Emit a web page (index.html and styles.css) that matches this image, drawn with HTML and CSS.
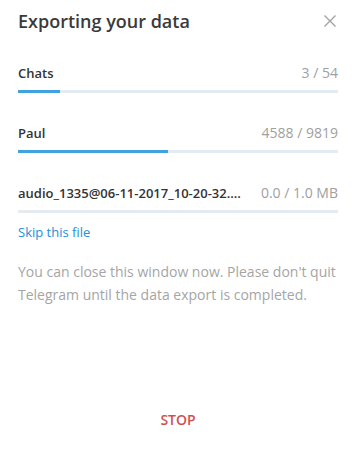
FILE: index.html
```html
<!DOCTYPE html>
<html>
<head>
<meta charset="utf-8">
<link rel="stylesheet" href="styles.css">
</head>
<body>
<div class="dialog">
  <div class="header">
    <div class="title">Exporting your data</div>
    <svg class="close" width="12" height="12" viewBox="0 0 12 12">
      <path d="M0.5 0.5 L11.5 11.5 M11.5 0.5 L0.5 11.5" stroke="#a3a3a3" stroke-width="1.4" fill="none"/>
    </svg>
  </div>
  <div class="sections">
    <div class="section">
      <div class="row"><span class="label">Chats</span><span class="value">3 / 54</span></div>
      <div class="track"><div class="fill" style="width:13.1%"></div></div>
    </div>
    <div class="section">
      <div class="row"><span class="label">Paul</span><span class="value">4588 / 9819</span></div>
      <div class="track"><div class="fill" style="width:46.9%"></div></div>
    </div>
    <div class="section">
      <div class="row"><span class="label file">audio_1335@06-11-2017_10-20-32....</span><span class="value">0.0 / 1.0 MB</span></div>
      <div class="track"><div class="fill" style="width:0%"></div></div>
    </div>
  </div>
  <a class="skip">Skip this file</a>
  <p class="note">You can close this window now. Please don't quit Telegram until the data export is completed.</p>
  <div class="footer"><span class="stop">STOP</span></div>
</div>
</body>
</html>
```
FILE: styles.css
```css
html, body {
  margin: 0;
  padding: 0;
  background: #ffffff;
}
body {
  font-family: "Open Sans", "Liberation Sans", sans-serif;
}
.dialog {
  box-sizing: border-box;
  width: 355px;
  height: 463px;
  padding: 9px 17px 0 18px;
  display: flex;
  flex-direction: column;
}
.header {
  display: flex;
  justify-content: space-between;
  align-items: center;
}
.title {
  font-size: 18px;
  font-weight: 600;
  line-height: 24px;
  color: #3a3a3a;
}
.close {
  display: block;
  margin-right: 2px;
  margin-top: -1px;
}
.sections {
  margin-top: 30px;
  display: flex;
  flex-direction: column;
  gap: 30px;
}
.row {
  display: flex;
  justify-content: space-between;
  align-items: baseline;
  line-height: 20px;
  margin-bottom: 7px;
  white-space: nowrap;
}
.label {
  font-size: 13px;
  font-weight: 600;
  color: #333333;
}
.value {
  font-size: 14px;
  color: #a0a0a0;
}
.track {
  height: 3px;
  background: #e4ebf1;
}
.fill {
  height: 3px;
  background: #40a3e0;
}
.skip {
  display: block;
  margin-top: 10px;
  font-size: 13px;
  line-height: 18px;
  color: #2590d4;
}
.note {
  margin: 19px 0 0 0;
  font-size: 14px;
  line-height: 23px;
  color: #a5a5a5;
}
.footer {
  margin-top: auto;
  padding-bottom: 33px;
  display: flex;
  justify-content: center;
}
.stop {
  font-size: 14px;
  font-weight: 600;
  line-height: 20px;
  color: #d24f4f;
}
```
